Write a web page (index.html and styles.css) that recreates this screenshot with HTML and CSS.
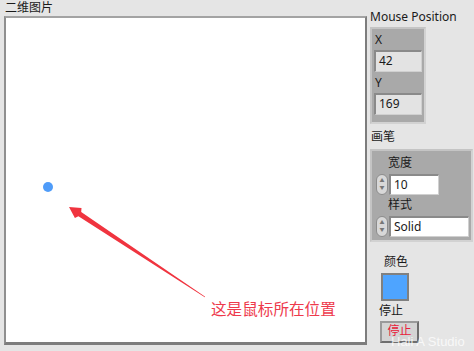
FILE: index.html
```html
<!DOCTYPE html>
<html>
<head lang="zh">
    <meta charset="UTF-8">
    <title>二维图片</title>
    <link rel="stylesheet" href="styles.css">
</head>
<body>
<div class="page">
    <div class="left">
        <div class="title">二维图片</div>
        <div class="canvas">
            <svg class="draw" width="359" height="324" viewBox="0 0 359 324">
                <circle cx="42" cy="169" r="5" fill="#4f9cf9"/>
                <polygon fill="#f0343f" points="63,189 75.5,190.1 75.2,194.1 199.2,278.7 198.8,279.3 72.4,198.3 68.9,200.1"/>
            </svg>
            <span class="note">这是鼠标所在位置</span>
        </div>
    </div>
    <div class="right">
        <div class="label mouse">Mouse Position</div>
        <div class="cluster pos">
            <div class="clabel">X</div>
            <div class="field">42</div>
            <div class="clabel">Y</div>
            <div class="field">169</div>
        </div>
        <div class="label pen">画笔</div>
        <div class="cluster brush">
            <div class="clabel sub">宽度</div>
            <div class="ctrl">
                <span class="spin"><i>&#9650;</i><i>&#9660;</i></span>
                <div class="input num">10</div>
            </div>
            <div class="clabel sub">样式</div>
            <div class="ctrl">
                <span class="spin"><i>&#9650;</i><i>&#9660;</i></span>
                <div class="input ring">Solid</div>
            </div>
        </div>
        <div class="label color">颜色</div>
        <div class="swatch"></div>
        <div class="label stop">停止</div>
        <div class="btn">停止</div>
    </div>
</div>
<div class="mark">Hali A Studio</div>
</body>
</html>
```

FILE: styles.css
```css
* {
    margin: 0;
    padding: 0;
}

body {
    background-color: #e5e5e5;
    font: 12px/14px "Noto Sans", "Noto Sans CJK SC", sans-serif;
    color: #1a1a1a;
    width: 474px;
    height: 351px;
    overflow: hidden;
    position: relative;
}

.page {
    display: flex;
    padding: 1px 0 0 4px;
}

.left {
    width: 363px;
}

.title {
    height: 15px;
    line-height: 14px;
    padding-left: 1px;
}

.canvas {
    position: relative;
    box-sizing: border-box;
    width: 363px;
    height: 329px;
    background-color: #fff;
    border-top: 2px solid #a3a3a3;
    border-left: 2px solid #8f8f8f;
    border-right: 2px solid #7d7d7d;
    border-bottom: 3px solid #7d7d7d;
}

.draw {
    position: absolute;
    left: 0;
    top: 0;
}

.note {
    position: absolute;
    left: 205px;
    top: 281px;
    font: 15.6px/18px "Noto Sans CJK SC", sans-serif;
    color: #ee3a4c;
}

.right {
    margin-left: 3px;
    width: 104px;
}

.label {
    line-height: 14px;
}

.mouse {
    margin-top: 9px;
}

.cluster {
    background-color: #a9a9a9;
    border-top: 2px solid #c4c4c4;
    border-left: 2px solid #c4c4c4;
    border-right: 2px solid #d2d2d2;
    border-bottom: 2px solid #d2d2d2;
    box-sizing: border-box;
}

.pos {
    width: 56px;
    height: 97px;
    margin-top: 3px;
    padding: 2px 2px 0 2px;
}

.clabel {
    height: 19px;
    line-height: 18px;
    padding-left: 1px;
}

.field {
    box-sizing: border-box;
    height: 22px;
    margin-bottom: 2px;
    background-color: #e3e3e3;
    border-top: 2px solid #8a8a8a;
    border-left: 2px solid #8a8a8a;
    border-right: 1px solid #d0d0d0;
    border-bottom: 1px solid #d0d0d0;
    padding-left: 3px;
    line-height: 18px;
}

.pen {
    margin-top: 6px;
    padding-left: 1px;
}

.brush {
    width: 103px;
    height: 93px;
    margin-top: 5px;
    padding: 4px 2px 0 1px;
}

.sub {
    padding-left: 15px;
    height: 18px;
    line-height: 16px;
}

.ctrl {
    display: flex;
    align-items: center;
    height: 22px;
    margin-bottom: 2px;
}

.spin {
    display: flex;
    flex-direction: column;
    align-items: center;
    justify-content: center;
    width: 12px;
    height: 21px;
    margin-left: 3px;
    border-radius: 6px;
    background-color: #d8d8d8;
    border: 1px solid #8c8c8c;
    box-sizing: border-box;
}

.spin i {
    font-style: normal;
    font-size: 5px;
    line-height: 7px;
    color: #777;
}

.input {
    box-sizing: border-box;
    height: 21px;
    background-color: #fff;
    border-top: 2px solid #8a8a8a;
    border-left: 2px solid #8a8a8a;
    border-right: 1px solid #d0d0d0;
    border-bottom: 1px solid #d0d0d0;
    padding-left: 3px;
    line-height: 17px;
}

.num {
    width: 50px;
    margin-left: 1px;
}

.ring {
    width: 81px;
    margin-left: 1px;
}

.color {
    margin-top: 13px;
    padding-left: 14px;
}

.swatch {
    width: 28px;
    height: 28px;
    margin: 4px 0 0 11px;
    box-sizing: border-box;
    background-color: #4ea4ff;
    border: 2px solid #808080;
}

.stop {
    margin-top: 3px;
    padding-left: 9px;
}

.btn {
    width: 39px;
    height: 22px;
    margin: 3px 0 0 10px;
    box-sizing: border-box;
    background-color: #d4d4d4;
    border-top: 2px solid #9a9a9a;
    border-left: 2px solid #9a9a9a;
    border-right: 2px solid #6e6e6e;
    border-bottom: 2px solid #6e6e6e;
    color: #e8203a;
    text-align: center;
    line-height: 16px;
}

.mark {
    position: absolute;
    left: 391px;
    top: 334px;
    font: 13px/15px "Liberation Sans", sans-serif;
    color: rgba(255, 255, 255, 0.75);
}
```
